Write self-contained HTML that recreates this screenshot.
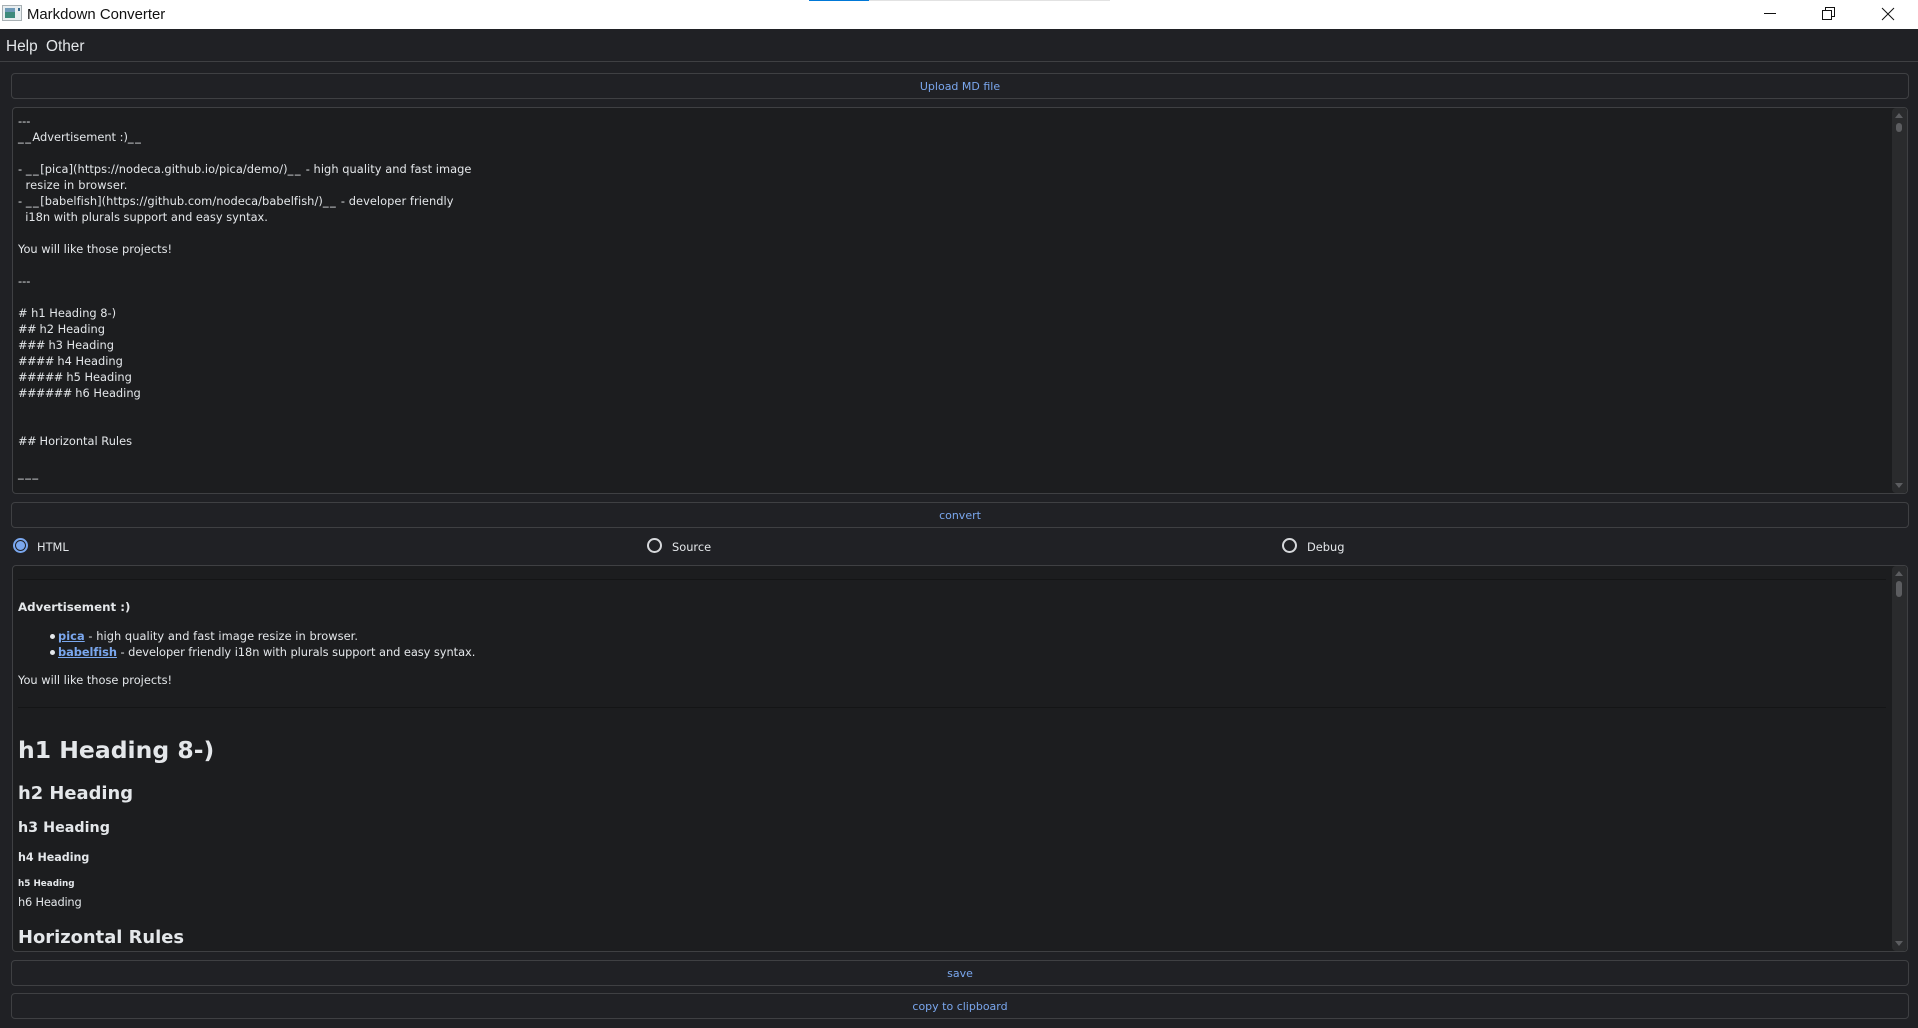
<!DOCTYPE html>
<html><head><meta charset="utf-8"><title>Markdown Converter</title>
<style>
html,body{margin:0;padding:0;width:1918px;height:1028px;overflow:hidden;background:#202125;font-family:"DejaVu Sans","Liberation Sans",sans-serif;font-size:11.4px;color:#e4e7ea}
.a{position:absolute;white-space:pre}
.title{left:0;top:0;width:1918px;height:29px;background:#fff}
.btn{position:absolute;left:11px;width:1896px;border:1px solid #3f4043;border-radius:4px;height:24px;line-height:26px;text-align:center;color:#7aa7ee;font-size:11px;box-sizing:content-box}
.edit{position:absolute;left:12px;width:1894px;border:1px solid #3f4043;border-radius:4px;background:#1c1d1f;overflow:hidden}
.sb{position:absolute;right:0;top:0;bottom:0;width:15px;background:#2a2b2d;border-radius:4px}
.th{position:absolute;left:4px;width:6px;height:9px;background:#5c5d60;border-radius:3px}
.up,.dn{position:absolute;left:3px;width:0;height:0;border-left:4px solid transparent;border-right:4px solid transparent}
.up{border-bottom:5px solid #5c5d60;top:5px}
.dn{border-top:5px solid #5c5d60;bottom:5px}
pre{margin:0;position:absolute;left:5px;top:5px;font:inherit;line-height:16px;color:#e4e7ea}
.u{letter-spacing:1.5px}
.n{letter-spacing:-.6px}
.w{letter-spacing:.05px}
.radio{position:absolute;width:11px;height:11px;border:2px solid #d6d8db;border-radius:50%}
.rl{position:absolute;top:540px;line-height:14px}
.l{color:#7aa7ee;font-weight:bold;text-decoration:underline}
.h{position:absolute;left:5px;font-weight:bold;white-space:pre;color:#e4e7ea}
.hr{position:absolute;left:5px;right:21px;height:1px;background:#141516}
.dot{position:absolute;left:37px;width:5px;height:5px;border-radius:50%;background:#e4e7ea}
</style></head>
<body>
<div class="a title"></div>
<div class="a" style="left:809px;top:0;width:60px;height:1px;background:#0078d7"></div>
<div class="a" style="left:869px;top:0;width:241px;height:1px;background:#e2e2e2"></div>
<svg class="a" style="left:2px;top:5px" width="20" height="17" viewBox="0 0 20 17"><rect x=".5" y=".5" width="19" height="15" fill="#e8eef0" stroke="#a8b0b4"/><rect x="3" y="3" width="10" height="10" fill="#3d8a7c"/><rect x="3" y="3" width="10" height="4" fill="#6f9ab8"/><rect x="16" y="3" width="2" height="3" fill="#3a6a8a"/></svg>
<div class="a" style="left:27px;top:6px;font-family:'Liberation Sans',sans-serif;font-size:14.9px;line-height:19px;color:#111">Markdown Converter</div>
<svg class="a" style="left:1764px;top:8px" width="14" height="12"><path d="M0 5.5H12" stroke="#111" stroke-width="1"/></svg>
<svg class="a" style="left:1822px;top:7px" width="14" height="14"><path d="M.5 3.5H9.5V12.5H.5ZM3.5 3.5V.5H12.5V9.5H9.5" fill="none" stroke="#111"/></svg>
<svg class="a" style="left:1881px;top:7px" width="14" height="14"><path d="M1 1L13 13M13 1L1 13" stroke="#111" stroke-width="1"/></svg>

<div class="a" style="left:6px;top:38px;font-size:15.4px;line-height:18px;font-family:'Liberation Sans',sans-serif;color:#e4e7ea">Help</div>
<div class="a" style="left:46px;top:38px;font-size:15.4px;line-height:18px;font-family:'Liberation Sans',sans-serif;color:#e4e7ea">Other</div>
<div class="a" style="left:0;top:61px;width:1918px;height:1px;background:#3f4043"></div>

<div class="btn" style="top:73px">Upload MD file</div>
<div class="edit" style="top:107px;height:385px">
<pre>---
<span class="u">__</span>Advertisement :)<span class="u">__</span>

<span class="w">- <span class="u">__</span>[pica](https://nodeca.github.io/pica/demo/)<span class="u">__</span> - high quality and fast image</span>
<span style="letter-spacing:.15px">  resize in browser.</span>
<span class="w">- <span class="u">__</span>[babelfish](https://github.com/nodeca/babelfish/)<span class="u">__</span> - developer friendly</span>
  i18n with plurals support and easy syntax.

You will like those projects!

---

# h1 Heading 8-)
<span class="n">##</span> h2 Heading
<span class="n">###</span> h3 Heading
<span class="n">####</span> h4 Heading
<span class="n">#####</span> h5 Heading
<span class="n">######</span> h6 Heading


<span class="n">##</span> Horizontal Rules

<span class="u">___</span></pre>
<div class="sb"><div class="up"></div><div class="th" style="top:15px"></div><div class="dn"></div></div>
</div>
<div class="btn" style="top:502px">convert</div>

<div class="radio" style="left:13px;top:538px;border-color:#7aa7ee"></div>
<div class="a" style="left:16px;top:541px;width:9px;height:9px;border-radius:50%;background:#7aa7ee"></div>
<div class="rl" style="left:37px">HTML</div>
<div class="radio" style="left:647px;top:538px"></div>
<div class="rl" style="left:672px">Source</div>
<div class="radio" style="left:1282px;top:538px"></div>
<div class="rl" style="left:1307px">Debug</div>

<div class="edit" style="top:565px;height:385px">
<div class="hr" style="top:13px"></div>
<div class="h" style="top:33px;font-size:11.8px;line-height:16px">Advertisement :)</div>
<div class="dot" style="top:68px"></div>
<div class="a" style="left:45px;top:62px;line-height:16px;letter-spacing:.05px"><span class="l">pica</span> - high quality and fast image resize in browser.</div>
<div class="dot" style="top:84px"></div>
<div class="a" style="left:45px;top:78px;line-height:16px;letter-spacing:-.05px"><span class="l">babelfish</span> - developer friendly i18n with plurals support and easy syntax.</div>
<div class="a" style="left:5px;top:106px;line-height:16px">You will like those projects!</div>
<div class="hr" style="top:141px"></div>
<div class="h" style="top:169px;font-size:23.5px;line-height:30px">h1 Heading 8-)</div>
<div class="h" style="top:216px;font-size:17.9px;line-height:24px">h2 Heading</div>
<div class="h" style="top:252px;font-size:14.3px;line-height:20px">h3 Heading</div>
<div class="h" style="top:284px;font-size:11.1px;line-height:16px">h4 Heading</div>
<div class="h" style="top:312px;font-size:8.8px;line-height:12px">h5 Heading</div>
<div class="a" style="left:5px;top:328px;line-height:16px;letter-spacing:-.2px">h6 Heading</div>
<div class="h" style="top:360px;font-size:17.9px;line-height:24px">Horizontal Rules</div>
<div class="sb"><div class="up"></div><div class="th" style="top:15px;height:16px"></div><div class="dn"></div></div>
</div>

<div class="btn" style="top:960px">save</div>
<div class="btn" style="top:993px">copy to clipboard</div>
</body></html>
